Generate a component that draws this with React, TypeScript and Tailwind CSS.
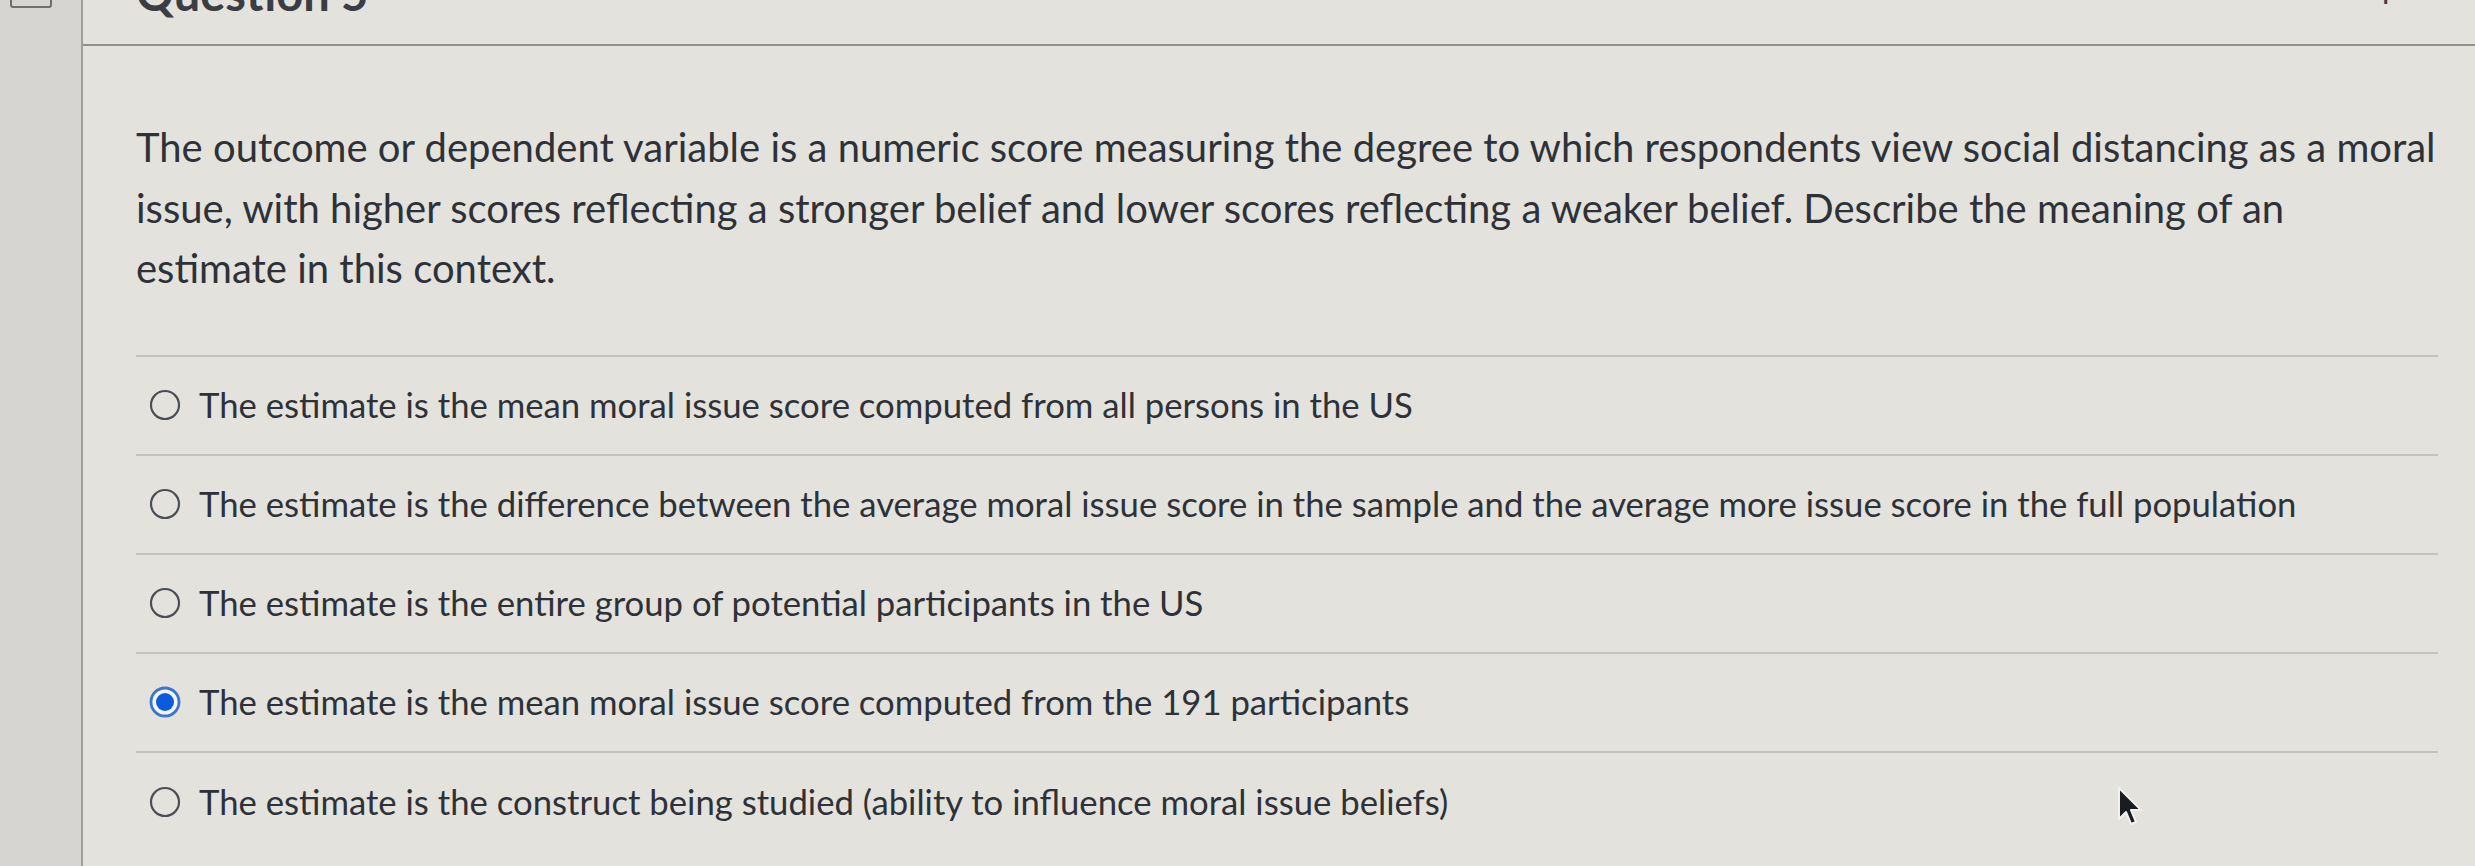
import React from 'react'

const options = [
  'The estimate is the mean moral issue score computed from all persons in the US',
  'The estimate is the difference between the average moral issue score in the sample and the average more issue score in the full population',
  'The estimate is the entire group of potential participants in the US',
  'The estimate is the mean moral issue score computed from the 191 participants',
  'The estimate is the construct being studied (ability to influence moral issue beliefs)',
]

const SELECTED = 3

function Radio({ checked }: { checked: boolean }) {
  return checked ? (
    <svg className="w-[32px] h-[32px] shrink-0" viewBox="0 0 32 32">
      <circle cx="16" cy="16" r="14" fill="#f4f5f7" stroke="#3d74cf" strokeWidth="2.8" />
      <circle cx="16" cy="16" r="9" fill="#0d5bdc" />
    </svg>
  ) : (
    <svg className="w-[32px] h-[32px] shrink-0" viewBox="0 0 32 32">
      <circle cx="16" cy="16" r="14" fill="none" stroke="#4b4f55" strokeWidth="2.2" />
    </svg>
  )
}

export default function App() {
  return (
    <div className="relative flex h-[866px] w-[2475px] overflow-hidden bg-[#e3e2dd] font-['Lato','Liberation_Sans',sans-serif] text-[#2e3238]">
      {/* left gutter */}
      <aside className="w-[83px] shrink-0 border-r-2 border-[#9e9f9d] bg-[#d6d5d1]">
        <div className="ml-[10px] -mt-[6px] h-[14px] w-[42px] rounded-b-[3px] border-2 border-[#6c6e70]" />
      </aside>

      <main className="flex flex-1 flex-col">
        <header className="flex h-[46px] shrink-0 items-start justify-between overflow-hidden border-b-2 border-[#8f9090] pl-[53px] pr-[50px]">
          <h2 className="-mt-[30px] text-[47px] font-bold leading-[47px] text-[#3a3e44]">Question 5</h2>
          <span className="-mt-[30px] text-[32px] leading-[32px] text-[#3a3e44]">1 pts</span>
        </header>

        <div className="w-[2355px] pl-[53px]">
          <p className="whitespace-nowrap pt-[71px] text-[40px] leading-[60.5px]">
            The outcome or dependent variable is a numeric score measuring the degree to which respondents view social distancing as a moral
            <br />
            issue, with higher scores reflecting a stronger belief and lower scores reflecting a weaker belief. Describe the meaning of an
            <br />
            estimate in this context.
          </p>

          <ul className="mt-[56px] border-t-2 border-[#c3c3bf]">
            {options.map((text, i) => (
              <li
                key={i}
                className={`flex h-[99px] items-center gap-[18px] pl-[13px] ${i < options.length - 1 ? 'border-b-2 border-[#c3c3bf]' : ''}`}
              >
                <Radio checked={i === SELECTED} />
                <span className="whitespace-nowrap text-[34.7px] leading-[40px]">{text}</span>
              </li>
            ))}
          </ul>
        </div>
      </main>

      {/* mouse pointer */}
      <svg className="absolute left-[2116px] top-[786px] h-[44px] w-[30px]" viewBox="0 0 30 44">
        <path d="M3 2 L3 33 L10 26 L15 38 L20 36 L15 24 L25 24 Z" fill="#1a1c20" stroke="#f2f2f2" strokeWidth="2" strokeLinejoin="round" />
      </svg>
    </div>
  )
}
